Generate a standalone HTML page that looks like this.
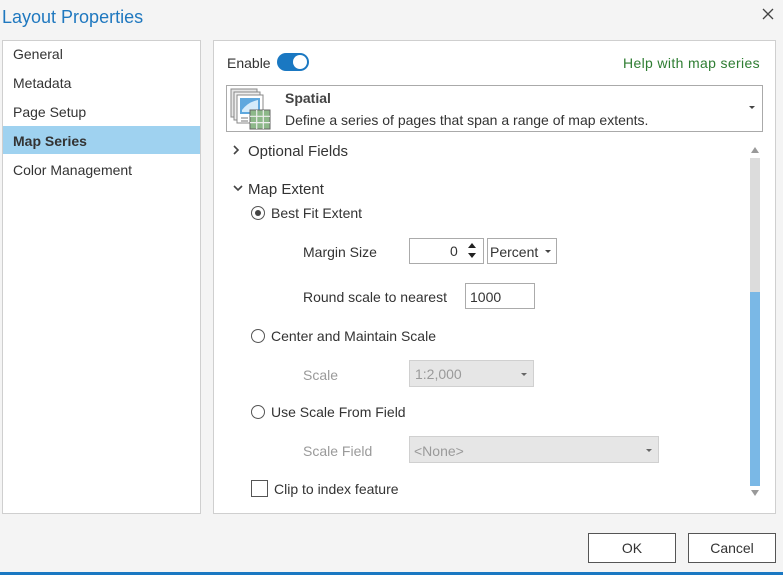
<!DOCTYPE html>
<html><head><style>
*{margin:0;padding:0;box-sizing:border-box}
body{width:783px;height:575px;background:#f4f4f4;font-family:"Liberation Sans",sans-serif;font-size:14px;color:#333;position:relative;overflow:hidden}
.a{position:absolute;white-space:nowrap}
.box{position:absolute;border:1px solid #ababab;background:#fff}
.dis{color:#9a9a9a}
.radio{position:absolute;width:14px;height:14px;border:1px solid #555;border-radius:50%;background:#fff}
.tri{position:absolute;width:0;height:0;border-left:3px solid transparent;border-right:3px solid transparent;border-top:3px solid #444}
</style></head><body>
<div class="a" style="left:2px;top:7px;font-size:18px;color:#1f78bf">Layout Properties</div>
<svg class="a" style="left:762px;top:8px" width="12" height="12"><path d="M1 1L11 11M11 1L1 11" stroke="#444" stroke-width="1.3"/></svg>

<div class="box" style="left:2px;top:40px;width:199px;height:474px;border-color:#cfcfcf"></div>
<div class="a" style="left:13px;top:46px">General</div>
<div class="a" style="left:13px;top:75px">Metadata</div>
<div class="a" style="left:13px;top:104px">Page Setup</div>
<div class="a" style="left:3px;top:126px;width:197px;height:28px;background:#9fd2f0"></div>
<div class="a" style="left:13px;top:133px;font-weight:bold">Map Series</div>
<div class="a" style="left:13px;top:162px">Color Management</div>

<div class="box" style="left:213px;top:40px;width:563px;height:474px;border-color:#cfcfcf"></div>
<div class="a" style="left:227px;top:55px">Enable</div>
<div class="a" style="left:277px;top:53px;width:32px;height:18px;border-radius:9px;background:#1a78c2"></div>
<div class="a" style="left:293px;top:55px;width:14px;height:14px;border-radius:50%;background:#fff"></div>
<div class="a" style="left:623px;top:55px;color:#2e7d32;letter-spacing:0.35px">Help with map series</div>

<div class="box" style="left:226px;top:85px;width:537px;height:47px;border-color:#aaa"></div>
<svg class="a" style="left:230px;top:88px" width="42" height="42" viewBox="0 0 42 42">
<rect x="1" y="1" width="26" height="28" fill="#e6e6e6" stroke="#888"/>
<rect x="4" y="4" width="26" height="28" fill="#eee" stroke="#888"/>
<rect x="7" y="7" width="26" height="28" fill="#fff" stroke="#888"/>
<rect x="10" y="10" width="20" height="16" fill="#5fa8de"/>
<path d="M12 22 q6-8 16-10 v12h-16z" fill="#d6ecfa"/>
<line x1="11" y1="30" x2="18" y2="30" stroke="#777"/>
<line x1="11" y1="33" x2="18" y2="33" stroke="#777"/>
<rect x="20" y="22" width="20" height="19" fill="#8db88a" stroke="#666"/>
<path d="M26.7 22v19M33.3 22v19M20 28.3h20M20 34.6h20" stroke="#eee" stroke-width="1.2"/>
</svg>
<div class="a" style="left:285px;top:90px;font-weight:bold;color:#444">Spatial</div>
<div class="a" style="left:285px;top:112px">Define a series of pages that span a range of map extents.</div>
<div class="tri" style="left:749px;top:106px"></div>

<svg class="a" style="left:232px;top:145px" width="8" height="10"><path d="M2 1L6 5L2 9" fill="none" stroke="#444" stroke-width="1.6"/></svg>
<div class="a" style="left:248px;top:143px;font-size:15px">Optional Fields</div>
<svg class="a" style="left:233px;top:184px" width="10" height="8"><path d="M1 2L5 6L9 2" fill="none" stroke="#444" stroke-width="1.6"/></svg>
<div class="a" style="left:248px;top:181px;font-size:15px">Map Extent</div>

<div class="radio" style="left:251px;top:206px"></div>
<div class="a" style="left:255px;top:210px;width:6px;height:6px;border-radius:50%;background:#444"></div>
<div class="a" style="left:271px;top:205px">Best Fit Extent</div>

<div class="a" style="left:303px;top:244px">Margin Size</div>
<div class="box" style="left:409px;top:238px;width:75px;height:26px"></div>
<div class="a" style="left:450px;top:243px">0</div>
<svg class="a" style="left:467px;top:241px" width="10" height="20"><path d="M1 7L5 2L9 7z M1 12L5 17L9 12z" fill="#222"/></svg>
<div class="box" style="left:487px;top:238px;width:70px;height:26px"></div>
<div class="a" style="left:490px;top:244px">Percent</div>
<div class="tri" style="left:545px;top:250px"></div>

<div class="a" style="left:303px;top:289px">Round scale to nearest</div>
<div class="box" style="left:465px;top:283px;width:70px;height:26px"></div>
<div class="a" style="left:470px;top:289px">1000</div>

<div class="radio" style="left:251px;top:329px"></div>
<div class="a" style="left:271px;top:328px">Center and Maintain Scale</div>
<div class="a dis" style="left:303px;top:367px">Scale</div>
<div class="box" style="left:409px;top:360px;width:125px;height:27px;background:#e6e6e6;border-color:#d0d0d0"></div>
<div class="a dis" style="left:415px;top:366px">1:2,000</div>
<div class="tri" style="left:521px;top:373px;border-top-color:#666"></div>

<div class="radio" style="left:251px;top:405px"></div>
<div class="a" style="left:271px;top:404px">Use Scale From Field</div>
<div class="a dis" style="left:303px;top:443px">Scale Field</div>
<div class="box" style="left:409px;top:436px;width:250px;height:27px;background:#e6e6e6;border-color:#d0d0d0"></div>
<div class="a dis" style="left:414px;top:443px">&lt;None&gt;</div>
<div class="tri" style="left:646px;top:449px;border-top-color:#666"></div>

<div class="a" style="left:251px;top:480px;width:17px;height:17px;border:1px solid #555;background:#fff"></div>
<div class="a" style="left:274px;top:481px">Clip to index feature</div>

<svg class="a" style="left:750px;top:146px" width="10" height="8"><path d="M1 7L5 1L9 7z" fill="#999"/></svg>
<div class="a" style="left:750px;top:158px;width:10px;height:134px;background:#dcdcdc"></div>
<div class="a" style="left:750px;top:292px;width:10px;height:194px;background:#7ab8e6"></div>
<svg class="a" style="left:750px;top:489px" width="10" height="8"><path d="M1 1L5 7L9 1z" fill="#999"/></svg>

<div class="a" style="left:588px;top:533px;width:88px;height:30px;border:1px solid #555;background:#fff;text-align:center;line-height:28px">OK</div>
<div class="a" style="left:688px;top:533px;width:88px;height:30px;border:1px solid #555;background:#fff;text-align:center;line-height:28px">Cancel</div>
<div class="a" style="left:0;top:572px;width:783px;height:3px;background:#1a78c2"></div>
</body></html>
